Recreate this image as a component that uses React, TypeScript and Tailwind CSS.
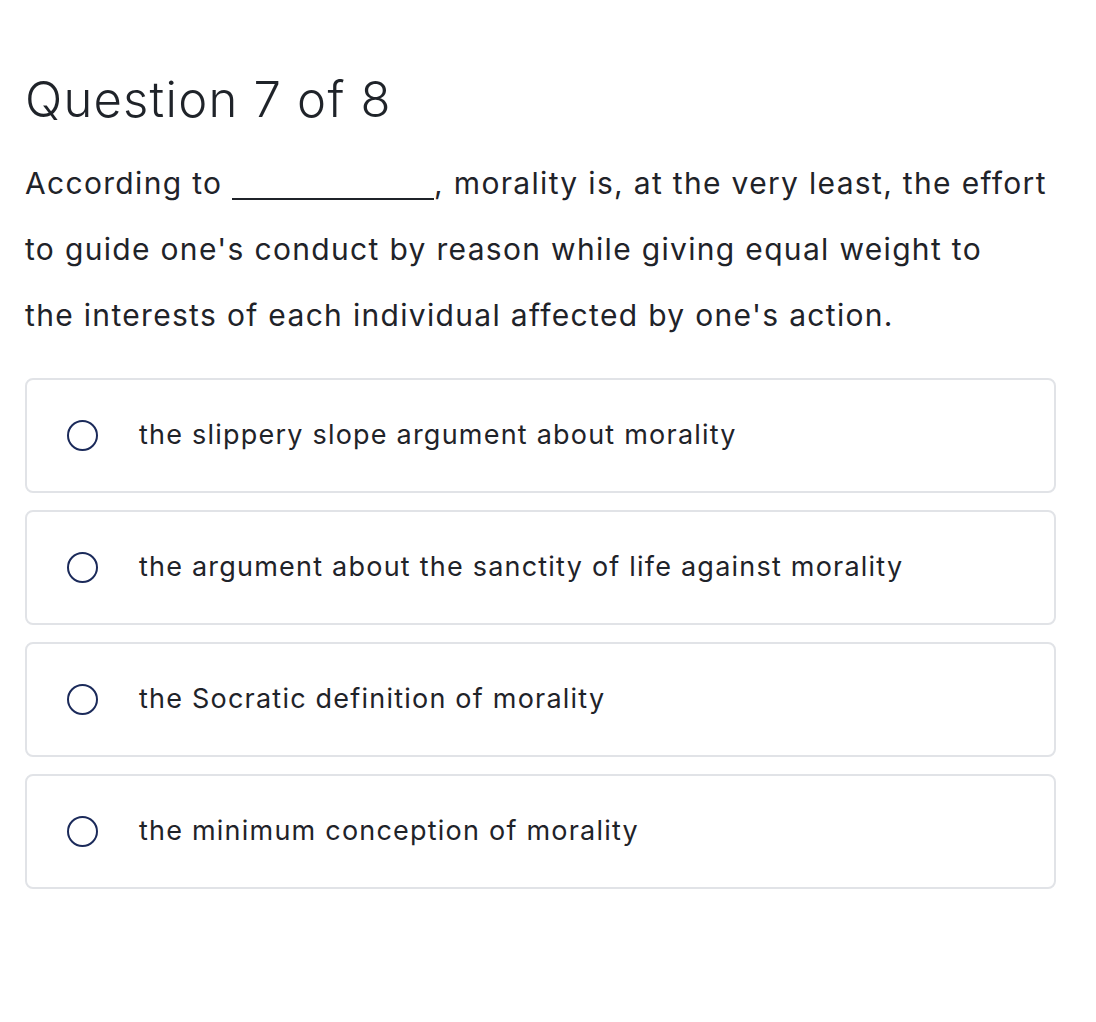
const options = [
  'the slippery slope argument about morality',
  'the argument about the sanctity of life against morality',
  'the Socratic definition of morality',
  'the minimum conception of morality',
]

export default function App() {
  return (
    <div className="min-h-screen bg-white px-[25px] pt-[68px] text-[#1f2329]" style={{ fontFamily: 'Inter, "Open Sans", sans-serif' }}>
      <h1 className="text-[49px] font-light leading-[64px] tracking-[0.025em]">Question 7 of 8</h1>
      <p className="mt-[18px] text-[30px] leading-[66px] tracking-[0.044em]">
        According to <span className="inline-block w-[202px] border-b-2 border-[#1f2329] leading-[30px]">&nbsp;</span>, morality is, at the very least, the effort
        <br />
        to guide one's conduct by reason while giving equal weight to
        <br />
        the interests of each individual affected by one's action.
      </p>
      <div className="mt-[30px] flex w-[1031px] flex-col gap-[17px]">
        {options.map((o) => (
          <label key={o} className="flex h-[115px] cursor-pointer items-center rounded-lg border-2 border-[#e1e3e7] pl-[40px]">
            <span className="h-[31px] w-[31px] shrink-0 rounded-full border-2 border-[#1b2a5a]"></span>
            <span className="ml-[41px] text-[27px] tracking-[0.045em]">{o}</span>
          </label>
        ))}
      </div>
    </div>
  )
}
